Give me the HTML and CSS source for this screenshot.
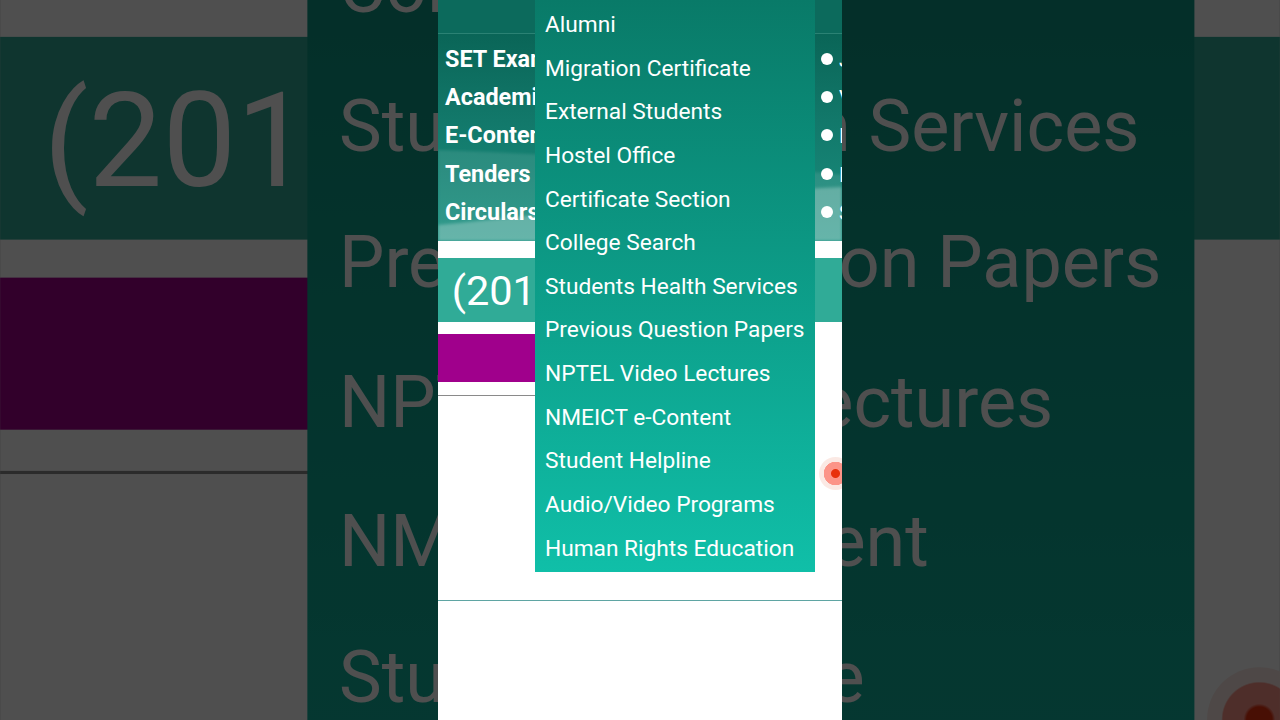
FILE: index.html
```html
<!DOCTYPE html>
<html lang="en">
<head>
<meta charset="utf-8">
<title>University menu</title>
<link rel="stylesheet" href="styles.css">
</head>
<body>
<main class="stage">
  <div class="phone phone-back" aria-hidden="true">
    <section class="hero">
      <svg class="swoosh" viewBox="0 0 404 208" preserveAspectRatio="none"><path class="sw-a" d="M0 117C120 122 280 128 404 142V208H0Z"/><path class="sw-b" d="M0 192C130 180 280 160 404 154V208H0Z"/></svg>
      <div class="hero-row"><b class="hero-label">SET Exam</b><i class="dot"></i><span class="peek">J</span></div>
      <div class="hero-row"><b class="hero-label">Academic</b><i class="dot"></i><span class="peek">V</span></div>
      <div class="hero-row"><b class="hero-label">E-Content</b><i class="dot"></i><span class="peek">I</span></div>
      <div class="hero-row"><b class="hero-label">Tenders</b><i class="dot"></i><span class="peek">I</span></div>
      <div class="hero-row"><b class="hero-label">Circulars</b><i class="dot"></i><span class="peek">S</span></div>
    </section>
    <div class="banner"><span class="banner-text">s (201</span></div>
    <div class="purple"></div>
    <div class="rule"></div>
    <div class="panel"></div>
    <span class="touch"></span>
    <nav class="menu">
      <a>Alumni</a><a>Migration Certificate</a><a>External Students</a><a>Hostel Office</a><a>Certificate Section</a><a>College Search</a><a>Students Health Services</a><a>Previous Question Papers</a><a>NPTEL Video Lectures</a><a>NMEICT e-Content</a><a>Student Helpline</a><a>Audio/Video Programs</a><a>Human Rights Education</a>
    </nav>
  </div>
  <div class="phone">
    <section class="hero">
      <svg class="swoosh" viewBox="0 0 404 208" preserveAspectRatio="none"><path class="sw-a" d="M0 117C120 122 280 128 404 142V208H0Z"/><path class="sw-b" d="M0 192C130 180 280 160 404 154V208H0Z"/></svg>
      <div class="hero-row"><b class="hero-label">SET Exam</b><i class="dot"></i><span class="peek">J</span></div>
      <div class="hero-row"><b class="hero-label">Academic</b><i class="dot"></i><span class="peek">V</span></div>
      <div class="hero-row"><b class="hero-label">E-Content</b><i class="dot"></i><span class="peek">I</span></div>
      <div class="hero-row"><b class="hero-label">Tenders</b><i class="dot"></i><span class="peek">I</span></div>
      <div class="hero-row"><b class="hero-label">Circulars</b><i class="dot"></i><span class="peek">S</span></div>
    </section>
    <div class="banner"><span class="banner-text">s (201</span></div>
    <div class="purple"></div>
    <div class="rule"></div>
    <div class="panel"></div>
    <span class="touch"></span>
    <nav class="menu">
      <a>Alumni</a><a>Migration Certificate</a><a>External Students</a><a>Hostel Office</a><a>Certificate Section</a><a>College Search</a><a>Students Health Services</a><a>Previous Question Papers</a><a>NPTEL Video Lectures</a><a>NMEICT e-Content</a><a>Student Helpline</a><a>Audio/Video Programs</a><a>Human Rights Education</a>
    </nav>
  </div>
</main>
</body>
</html>
```
FILE: styles.css
```css
* { box-sizing: border-box; }
html, body { margin: 0; height: 100%; background: #000; }
body { font-family: Roboto, "Liberation Sans", sans-serif; color: #fff; overflow: hidden; }

.stage { display: grid; width: 1280px; height: 720px; overflow: hidden; grid-template: 720px / 1280px; }
.phone {
  grid-area: 1 / 1;
  justify-self: center;
  position: relative;
  width: 404px;
  height: 720px;
  background: #fff;
  overflow: hidden;
  display: flex;
  flex-direction: column;
}
.phone-back { transform: scale(3.168); filter: brightness(.31) blur(.25px); }

.hero {
  position: relative;
  flex: none;
  height: 241px;
  padding-top: 33px;
  background: linear-gradient(#0c6a5c 0, #0c6a5c 33px, #0a6557 34px, #12786a 120px, #1a9080 241px);
}
.hero::before { content: ""; position: absolute; left: 0; right: 0; top: 33px; height: 1px; background: #2b8274; }
.swoosh { position: absolute; left: 0; bottom: 0; width: 100%; height: 208px; filter: blur(1.5px); }
.sw-a { fill: #fff; opacity: .1; }
.sw-b { fill: #fff; opacity: .26; }

.hero-row {
  position: relative;
  height: 38.4px;
  padding-left: 7px;
  display: flex;
  align-items: center;
}
.hero-row:first-of-type { margin-top: 6.5px; }
.hero-label { font-size: 23.4px; font-weight: 700; white-space: nowrap; }
.dot { position: absolute; left: 383px; top: 13px; width: 12px; height: 12px; border-radius: 50%; background: #fff; }
.peek { position: absolute; left: 401px; top: 8px; font-size: 20px; }

.banner {
  flex: none;
  margin-top: 17px;
  height: 64px;
  background: #30ab97;
  overflow: hidden;
  display: flex;
  align-items: center;
}
.banner-text { margin-left: -24px; word-spacing: 6px; font-size: 41.5px; font-weight: 400; white-space: nowrap; }
.purple { flex: none; margin-top: 12px; width: 220px; height: 48px; background: #a0008c; }
.rule { flex: none; margin-top: 13px; width: 220px; height: 1px; background: #8a8a8a; }
.panel { flex: none; margin-top: 204px; height: 1px; background: #5fa5a3; }

.touch {
  position: absolute;
  left: 381px;
  top: 456.5px;
  width: 33px;
  height: 33px;
  border-radius: 50%;
  background: radial-gradient(circle, #e8300c 0 4px, #fc9488 5px 11.5px, #fbe9e4 12px 16.5px);
}

.menu {
  position: absolute;
  left: 97px;
  top: 0;
  width: 280px;
  height: 572px;
  padding-top: 3px;
  background: linear-gradient(#097a68, #10bfa8);
  display: flex;
  flex-direction: column;
}
.menu a { flex: none; height: 43.65px; line-height: 43.65px; padding-left: 10px; font-size: 22.7px; white-space: nowrap; }
```
